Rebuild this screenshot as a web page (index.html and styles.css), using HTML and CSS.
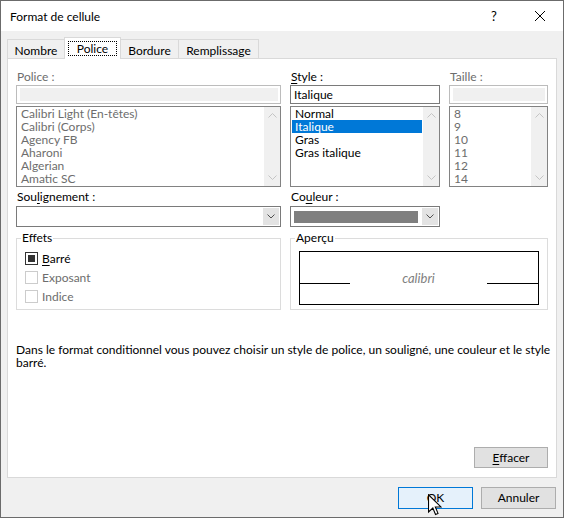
FILE: index.html
```html
<!DOCTYPE html>
<html lang="fr">
<head>
<meta charset="utf-8">
<title>Format de cellule</title>
<link rel="stylesheet" href="styles.css">
</head>
<body>
<div class="window">
  <div class="titlebar">
    <span class="title">Format de cellule</span>
    <span class="tbtn help">?</span>
    <span class="tbtn close"><svg width="10" height="10" viewBox="0 0 10 10"><path d="M0 0 L10 10 M10 0 L0 10" stroke="#000" stroke-width="1" fill="none"/></svg></span>
  </div>
  <div class="client">
    <div class="tabs">
      <div class="tab w-nombre">Nombre</div>
      <div class="tab active w-police"><span class="focus">Police</span></div>
      <div class="tab w-bordure">Bordure</div>
      <div class="tab w-rempl">Remplissage</div>
    </div>
    <div class="panel">
      <div class="grid">
        <div class="col">
          <div class="label dis">Police :</div>
          <div class="textbox dis"><div class="fill"></div></div>
          <div class="listbox">
            <ul class="items dis">
              <li>Calibri Light (En-têtes)</li>
              <li>Calibri (Corps)</li>
              <li>Agency FB</li>
              <li>Aharoni</li>
              <li>Algerian</li>
              <li>Amatic SC</li>
            </ul>
            <div class="vscroll">
              <div class="arrow"><svg width="9" height="5" viewBox="0 0 9 5"><path d="M0.5 4.5 L4.5 0.5 L8.5 4.5" fill="none" stroke="#c4c4c4"/></svg></div>
              <div class="arrow"><svg width="9" height="5" viewBox="0 0 9 5"><path d="M0.5 0.5 L4.5 4.5 L8.5 0.5" fill="none" stroke="#c4c4c4"/></svg></div>
            </div>
          </div>
        </div>
        <div class="col">
          <div class="label"><u>S</u>tyle :</div>
          <div class="textbox">Italique</div>
          <div class="listbox">
            <ul class="items">
              <li>Normal</li>
              <li class="sel">Italique</li>
              <li>Gras</li>
              <li>Gras italique</li>
            </ul>
            <div class="vscroll">
              <div class="arrow"><svg width="9" height="5" viewBox="0 0 9 5"><path d="M0.5 4.5 L4.5 0.5 L8.5 4.5" fill="none" stroke="#c4c4c4"/></svg></div>
              <div class="arrow"><svg width="9" height="5" viewBox="0 0 9 5"><path d="M0.5 0.5 L4.5 4.5 L8.5 0.5" fill="none" stroke="#c4c4c4"/></svg></div>
            </div>
          </div>
        </div>
        <div class="col">
          <div class="label dis">Taille :</div>
          <div class="textbox dis"><div class="fill"></div></div>
          <div class="listbox">
            <ul class="items dis">
              <li>8</li>
              <li>9</li>
              <li>10</li>
              <li>11</li>
              <li>12</li>
              <li>14</li>
            </ul>
            <div class="vscroll">
              <div class="arrow"><svg width="9" height="5" viewBox="0 0 9 5"><path d="M0.5 4.5 L4.5 0.5 L8.5 4.5" fill="none" stroke="#c4c4c4"/></svg></div>
              <div class="arrow"><svg width="9" height="5" viewBox="0 0 9 5"><path d="M0.5 0.5 L4.5 4.5 L8.5 0.5" fill="none" stroke="#c4c4c4"/></svg></div>
            </div>
          </div>
        </div>
      </div>

      <div class="grid row2">
        <div class="col">
          <div class="label">Sou<u>l</u>ignement :</div>
          <div class="combo">
            <div class="drop"><svg width="8" height="5" viewBox="0 0 8 5"><path d="M0.5 0.5 L4 4 L7.5 0.5" fill="none" stroke="#505050"/></svg></div>
          </div>
        </div>
        <div class="col">
          <div class="label">Co<u>u</u>leur :</div>
          <div class="combo">
            <div class="swatch"></div>
            <div class="drop"><svg width="8" height="5" viewBox="0 0 8 5"><path d="M0.5 0.5 L4 4 L7.5 0.5" fill="none" stroke="#505050"/></svg></div>
          </div>
        </div>
      </div>

      <div class="grid groups">
        <fieldset class="group">
          <legend>Effets</legend>
          <div class="check"><span class="cb"><span class="mark"></span></span><span><u>B</u>arré</span></div>
          <div class="check dis"><span class="cb"></span><span>Exposant</span></div>
          <div class="check dis"><span class="cb"></span><span>Indice</span></div>
        </fieldset>
        <fieldset class="group apercu">
          <legend>Aperçu</legend>
          <div class="preview">
            <div class="line"></div>
            <div class="sample">calibri</div>
            <div class="line"></div>
          </div>
        </fieldset>
      </div>

      <p class="desc">Dans le format conditionnel vous pouvez choisir un style de police, un souligné, une couleur et le style<br>barré.</p>

      <div class="panel-foot">
        <button class="btn"><u>E</u>ffacer</button>
      </div>
    </div>
    <div class="footer">
      <button class="btn big default">OK</button>
      <button class="btn big">Annuler</button>
    </div>
  </div>
  <svg class="cursor" width="14" height="22" viewBox="0 0 13 20"><path d="M0.5 0.5 L0.5 16.5 L4.5 12.8 L7 18.8 L9.3 17.8 L6.8 11.8 L12 11.8 Z" fill="#fff" stroke="#000" stroke-width="1" stroke-linejoin="miter"/></svg>
</div>
</body>
</html>
```

FILE: styles.css
```css
* { box-sizing: border-box; }
html, body { margin: 0; padding: 0; background: #fff; }
body {
  font-family: Lato, "Noto Sans", sans-serif;
  font-size: 12px;
  color: #000;
}
u { text-decoration: underline; text-underline-offset: 2px; }

.window {
  width: 564px;
  height: 518px;
  border: 1px solid #6b6b6b;
  background: #f0f0f0;
  display: flex;
  flex-direction: column;
  position: relative;
  overflow: hidden;
}

/* title bar */
.titlebar {
  height: 30px;
  flex: none;
  background: #fff;
  display: flex;
  align-items: center;
  line-height: 15px;
  padding-left: 9px;
}
.title { flex: 1; }
.tbtn {
  width: 46px;
  height: 30px;
  display: flex;
  align-items: center;
  justify-content: center;
}
.help { font-size: 13px; }
.close svg { display: block; }

/* client */
.client {
  flex: 1;
  display: flex;
  flex-direction: column;
  padding: 6px 6px 0 6px;
}

.tabs {
  display: flex;
  align-items: flex-end;
  height: 21px;
  position: relative;
  z-index: 2;
}
.tab {
  height: 19px;
  border: 1px solid #d9d9d9;
  border-bottom: none;
  background: #f0f0f0;
  padding-top: 3px;
  line-height: 15px;
  text-align: center;
  margin-left: -1px;
  white-space: nowrap;
}
.tab:first-child { margin-left: 0; }
.w-nombre { width: 58px; }
.w-police { width: 57px; }
.w-bordure { width: 59px; }
.w-rempl { width: 81px; }
.tab.active {
  height: 22px;
  background: #fff;
  margin-bottom: -1px;
  position: relative;
}
.focus {
  display: inline-block;
  line-height: 13px;
  padding: 0 8px;
  border: 1px dotted #000;
}

.panel {
  height: 420px;
  flex: none;
  background: #fff;
  border: 1px solid #d9d9d9;
  padding: 10px 8px 9px 8px;
  display: flex;
  flex-direction: column;
}

.grid {
  display: grid;
  grid-template-columns: 265px 150px 99px;
  column-gap: 9px;
}
.col { display: flex; flex-direction: column; min-width: 0; }

.label {
  height: 15px;
  line-height: 15px;
  padding-left: 1px;
  white-space: nowrap;
}
.dis { color: #6d6d6d; }

.textbox {
  height: 19px;
  margin-top: 1px;
  border: 1px solid #7a7a7a;
  background: #fff;
  padding: 0 3px;
  line-height: 17px;
}
.textbox.dis {
  border-color: #bcbcbc;
  padding: 2px 2px 2px 3px;
}
.fill { height: 13px; background: #f0f0f0; }

.listbox {
  margin-top: 2px;
  height: 81px;
  border: 1px solid #828282;
  background: #fff;
  display: flex;
}
.items {
  flex: 1;
  margin: 0;
  padding: 0 1px;
  list-style: none;
  line-height: 13px;
  overflow: hidden;
  min-width: 0;
}
.items li {
  height: 13px;
  padding-left: 3px;
  white-space: nowrap;
}
.items li.sel { background: #0078d7; color: #fff; }

.vscroll {
  width: 16px;
  flex: none;
  background: #f0f0f0;
  display: flex;
  flex-direction: column;
  justify-content: space-between;
}
.arrow {
  height: 17px;
  display: flex;
  align-items: center;
  justify-content: center;
}
.arrow svg { display: block; }

.row2 { margin-top: 2px; }
.combo {
  margin-top: 2px;
  height: 21px;
  border: 1px solid #7a7a7a;
  background: #fff;
  padding: 1px;
  display: flex;
  justify-content: flex-end;
}
.drop {
  width: 16px;
  background: #e3e3e3;
  display: flex;
  align-items: center;
  justify-content: center;
}
.drop svg { display: block; }
.swatch {
  flex: 1;
  background: #7f7f7f;
  margin: 3px 4px 2px 2px;
}

.groups { margin-top: 3px; }
.group {
  margin: 0;
  padding: 3px 8px 3px 8px;
  border: 1px solid #dcdcdc;
  min-width: 0;
}
.apercu { grid-column: 2 / 4; }
.group legend {
  padding: 0 1px;
  margin-left: -4px;
  line-height: 16px;
}
.check {
  height: 19px;
  display: flex;
  align-items: center;
  gap: 4px;
}
.cb {
  width: 13px;
  height: 13px;
  border: 1px solid #333;
  background: #fff;
  display: flex;
  align-items: center;
  justify-content: center;
}
.cb .mark { width: 7px; height: 7px; background: #333; }
.check.dis .cb { border-color: #cccccc; }

.preview {
  margin-top: 2px;
  height: 54px;
  border: 1px solid #000;
  padding-top: 19px;
  display: grid;
  grid-template-columns: 50px 1fr 51px;
  align-items: start;
}
.line { height: 1px; background: #000; margin-top: 12px; }
.sample {
  text-align: center;
  font-style: italic;
  font-size: 13px;
  line-height: 15px;
  color: #808080;
}

.desc {
  margin: 33px 0 0 0;
  line-height: 13px;
  white-space: nowrap;
}

.panel-foot {
  margin-top: auto;
  display: flex;
  justify-content: flex-end;
}
.btn {
  font: inherit;
  color: #000;
  height: 21px;
  width: 74px;
  padding: 0;
  background: #e1e1e1;
  border: 1px solid #adadad;
  line-height: 19px;
  text-align: center;
}
.btn.big { height: 22px; width: 75px; line-height: 20px; }
.btn.default { background: #e5f1fb; border-color: #0078d7; }

.footer {
  display: flex;
  justify-content: flex-end;
  gap: 8px;
  padding-top: 9px;
  padding-right: 1px;
}

.cursor {
  position: absolute;
  left: 427px;
  top: 493px;
  display: block;
}
```
